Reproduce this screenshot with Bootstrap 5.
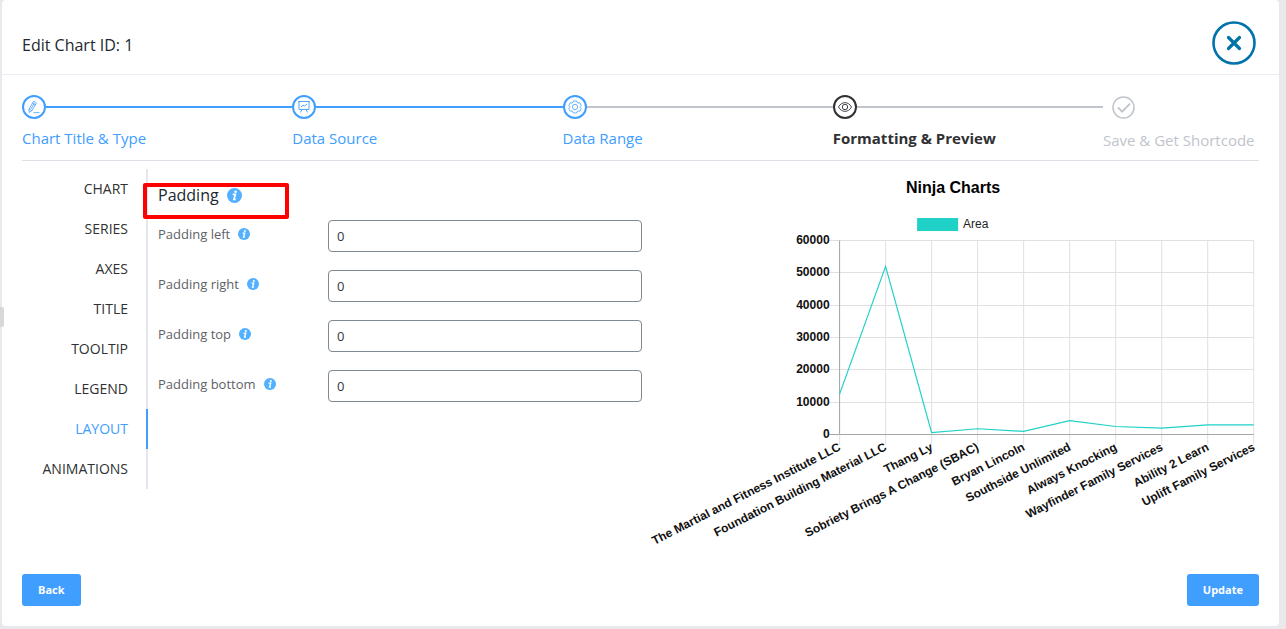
<!DOCTYPE html>
<html lang="en">
<head>
<meta charset="utf-8">
<meta name="viewport" content="width=device-width, initial-scale=1">
<title>Edit Chart</title>
<link rel="stylesheet" href="https://cdn.jsdelivr.net/npm/bootstrap@5.3.0/dist/css/bootstrap.min.css">
<style>
  body { background: #e9e9eb; color: #303133; font-family: "Open Sans", "Noto Sans", sans-serif; font-size: 14px; line-height: 20px; }
  .editor { margin: 0 7px 3px 2px; border-radius: 4px; }
  .editor-head { height: 75px; padding: 13px 23px 0 20px; border-bottom: 1px solid #ebeef5; }
  .editor-head h1 { font-size: 16px; line-height: 24px; color: #23282d; }
  .close-btn { width: 44px; height: 44px; color: #0073aa; }
  .steps { padding-top: 20px; border-bottom: 1px solid #dcdfe6; height: 86px; list-style: none; }
  .step { flex: 1 1 0; color: #409eff; font-size: 15px; line-height: 24px; }
  .step:last-child { flex: 0 0 156px; white-space: nowrap; }
  .step-head { height: 24px; margin-bottom: 7px; }
  .step-head::after { content: ""; flex: 1; height: 2px; background: #409eff; }
  .step-icon { width: 24px; height: 24px; border: 2px solid; }
  .step.pending .step-head::after, .step.current .step-head::after { background: #c0c4cc; }
  .step.current { color: #303133; }
  .step.last { color: #c0c4cc; }
  .step.last .step-head { margin: 1px 9px 8px; }
  .step.last .step-head::after { display: none; }
  .side-tabs { flex: 0 0 126px; padding-top: 8px; }
  .side-tabs a { display: block; height: 40px; line-height: 40px; padding-right: 18px; text-align: right; border-right: 2px solid #e4e7ed; color: #303133; text-decoration: none; }
  .side-tabs a.active { color: #409eff; border-color: #409eff; }
  .form-pane { flex: 0 0 calc((100% - 126px) * 4 / 9); padding: 22px 0 0 10px; }
  .form-pane h2 { font-size: 16px; line-height: 24px; margin-bottom: 13px; color: #23282d; }
  .highlight-box { left: -15px; top: 0; width: 146px; height: 36px; border: 4px solid red; border-radius: 2px; }
  .field { margin-bottom: 18px; }
  .field label { flex: 0 0 170px; color: #606266; height: 28px; font-size: 13px; }
  .field input { height: 32px; padding: 0 8px; font-size: 13px; color: #32373c; border: 1px solid #7e8993; border-radius: 4px; }
  .chart-pane { flex: 1 1 0; font-family: "Liberation Sans", Arial, sans-serif; }
  .chart-pane svg { width: 100%; height: auto; }
  .medium { font-weight: 500; }
  .action { height: 32px; padding: 0 16px; font-size: 11px; font-weight: 700; color: #fff; background: #409eff; border: 0; border-radius: 3px; }
  .drag-handle { left: 0; top: 307px; width: 4px; height: 20px; background: #d8d8d8; border-radius: 0 2px 2px 0; }
</style>
</head>
<body>
<main class="editor bg-white">
  <header class="editor-head d-flex justify-content-between">
    <h1 class="medium mb-0 mt-3 pt-1">Edit Chart ID: 1</h1>
    <button class="close-btn btn p-0 border-0 mt-2" aria-label="Close">
      <svg width="44" height="44" viewBox="0 0 44 44" fill="none" stroke="currentColor" class="d-block"><circle cx="22" cy="22" r="20.5" stroke-width="2.6"/><path d="M16.5 16.5l11 11m0-11l-11 11" stroke-width="3.2" stroke-linecap="round"/></svg>
    </button>
  </header>

  <div class="px-3 mx-1">
    <ol class="steps d-flex ps-0 mb-0">
      <li class="step">
        <div class="step-head d-flex align-items-center"><span class="step-icon rounded-circle d-flex align-items-center justify-content-center"><svg width="14" height="14" viewBox="0 0 14 14" fill="none" stroke="currentColor" stroke-width=".8"><path d="M2 9l4.500-7.500q1.800-.5 2.800 1.700L4.800 10.700 2 12.500zM5.500 3.100l2.800 1.700M2 9l2.800 1.700M3.800 9.200l3.600-6M6.500 12.600h6"/></svg></span></div>
        <div>Chart Title &amp; Type</div>
      </li>
      <li class="step">
        <div class="step-head d-flex align-items-center"><span class="step-icon rounded-circle d-flex align-items-center justify-content-center"><svg width="14" height="14" viewBox="0 0 14 14" fill="none" stroke="currentColor" stroke-width=".9"><path d="M1 1.500h12M2 1.500v8h10v-8M5 9.500l-1.500 3M9 9.500l1.500 3M4 7l2-2 1.500 1.200L10 4"/></svg></span></div>
        <div>Data Source</div>
      </li>
      <li class="step pending">
        <div class="step-head d-flex align-items-center"><span class="step-icon rounded-circle d-flex align-items-center justify-content-center"><svg width="14" height="14" viewBox="0 0 14 14" fill="none" stroke="currentColor" stroke-width=".8"><circle cx="7" cy="7" r="2.6"/><path d="M5.400 1h3.200l.5 1.500 1 .6 1.600-.4L13.200 5.500l-1 1.200v.7l1 1.200-1.500 2.700-1.600-.4-1 .6L8.600 13H5.400l-.5-1.500-1-.6-1.600.4L.8 8.600l1-1.200v-.7l-1-1.200L2.300 2.700l1.600.4 1-.6z"/></svg></span></div>
        <div>Data Range</div>
      </li>
      <li class="step current">
        <div class="step-head d-flex align-items-center"><span class="step-icon rounded-circle d-flex align-items-center justify-content-center"><svg width="14" height="14" viewBox="0 0 14 14" fill="none" stroke="currentColor" stroke-width=".9"><path d="M.5 7C3.500 1.200 10.500 1.200 13.500 7 10.500 12.800 3.500 12.800.5 7z"/><circle cx="7" cy="7" r="2.700"/></svg></span></div>
        <div class="fw-bold">Formatting &amp; Preview</div>
      </li>
      <li class="step last">
        <div class="step-head"><svg width="23" height="23" viewBox="0 0 23 23" fill="none" stroke="currentColor" class="d-block"><circle cx="11.500" cy="11.500" r="10.500" stroke-width="1.500"/><path d="M6 11.500l4.200 4.200 7.800-8" stroke-width="1.800"/></svg></div>
        <div>Save &amp; Get Shortcode</div>
      </li>
    </ol>

    <div class="d-flex">
      <nav class="side-tabs" aria-label="Chart options">
        <a href="#">CHART</a><a href="#">SERIES</a><a href="#">AXES</a><a href="#">TITLE</a><a href="#">TOOLTIP</a><a href="#">LEGEND</a><a href="#" class="active">LAYOUT</a><a href="#">ANIMATIONS</a>
      </nav>
      <form class="form-pane">
        <div class="position-relative">
          <h2 class="medium d-flex align-items-center">Padding <svg class="ms-2" width="15" height="15" viewBox="0 0 14 14"><use href="#info"/></svg></h2>
          <div class="highlight-box position-absolute"></div>
        </div>
        <div class="field d-flex"><label for="pl" class="d-flex align-items-center">Padding left <svg class="ms-2" width="12" height="12" viewBox="0 0 14 14"><use href="#info"/></svg></label><input id="pl" type="text" class="form-control" value="0"></div>
        <div class="field d-flex"><label for="pr" class="d-flex align-items-center">Padding right <svg class="ms-2" width="12" height="12" viewBox="0 0 14 14"><use href="#info"/></svg></label><input id="pr" type="text" class="form-control" value="0"></div>
        <div class="field d-flex"><label for="pt" class="d-flex align-items-center">Padding top <svg class="ms-2" width="12" height="12" viewBox="0 0 14 14"><use href="#info"/></svg></label><input id="pt" type="text" class="form-control" value="0"></div>
        <div class="field d-flex"><label for="pb" class="d-flex align-items-center">Padding bottom <svg class="ms-2" width="12" height="12" viewBox="0 0 14 14"><use href="#info"/></svg></label><input id="pb" type="text" class="form-control" value="0"></div>
      </form>
      <div class="chart-pane">
        <svg id="chart" class="d-block" viewBox="0 0 617 401" role="img" aria-label="Ninja Charts">
          <text x="311" y="32" text-anchor="middle" font-size="16" font-weight="700">Ninja Charts</text>
          <rect x="275" y="57" width="41" height="13" fill="#1fd1c7"/>
          <text x="321" y="67" font-size="12" fill="#222">Area</text>
        </svg>
      </div>
    </div>

    <footer class="d-flex justify-content-between pt-2 pb-3 mt-1">
      <button class="action mb-1">Back</button>
      <button class="action mb-1">Update</button>
    </footer>
  </div>
</main>
<div class="drag-handle position-absolute"></div>

<svg width="0" height="0" class="position-absolute" aria-hidden="true">
  <symbol id="info" viewBox="0 0 14 14"><circle cx="7" cy="7" r="7" fill="#53b0ff"/><circle cx="8" cy="3.500" r="1.200" fill="#fff"/><path d="M5.300 6h2.500L6.500 10.600h1.600" fill="none" stroke="#fff" stroke-width="1.600"/></symbol>
</svg>

<script src="https://cdn.jsdelivr.net/npm/bootstrap@5.3.0/dist/js/bootstrap.bundle.min.js"></script>
<script>
  const rows = [
    ['The Martial and Fitness Institute LLC', 12500], ['Foundation Building Material LLC', 52000],
    ['Thang Ly', 600], ['Sobriety Brings A Change (SBAC)', 1800], ['Bryan Lincoln', 1000],
    ['Southside Unlimited', 4300], ['Always Knocking', 2500], ['Wayfinder Family Services', 2000],
    ['Ability 2 Learn', 3000], ['Uplift Family Services', 3000]
  ];
  const chart = document.getElementById('chart');
  const left = 197.5, step = 46, base = 273.5, height = 194;
  const add = (tag, attrs, text) => {
    const el = document.createElementNS('http://www.w3.org/2000/svg', tag);
    for (const k in attrs) el.setAttribute(k, attrs[k]);
    if (text) el.textContent = text;
    chart.append(el);
  };
  const rule = (x1, y1, x2, y2, stroke) => add('line', {x1, y1, x2, y2, stroke});
  for (let v = 0; v <= 60000; v += 10000) {
    const y = Math.round(base - v / 60000 * height - 0.5) + 0.5;
    rule(left - 10, y, left + step * 9, y, v ? '#e0e0e0' : '#a6a6a6');
    add('text', {x: left - 10, y: y + 3.5, 'text-anchor': 'end', 'font-size': 12, 'font-weight': 700, fill: '#111'}, String(v));
  }
  rows.forEach(([name], i) => {
    const x = left + i * step;
    rule(x, base - height, x, base + 10, '#e0e0e0');
    add('text', {transform: `translate(${x + 2} ${base + 15}) rotate(-27)`, 'text-anchor': 'end', 'font-size': 12, 'font-weight': 700, fill: '#111'}, name);
  });
  rule(left, base - height, left, base, '#a6a6a6');
  rule(left, base, left + step * 9, base, '#a6a6a6');
  add('polyline', {fill: 'none', stroke: '#1fd1c7', 'stroke-width': 1.2,
    points: rows.map(([, v], i) => `${left + i * step},${base - v / 60000 * height}`).join(' ')});
</script>
</body>
</html>
